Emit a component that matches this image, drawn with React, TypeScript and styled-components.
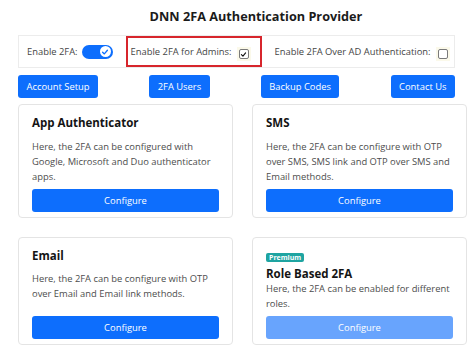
import React from 'react';
import styled, { createGlobalStyle } from 'styled-components';

const GlobalStyle = createGlobalStyle`
  body {
    margin: 0;
    background: #ffffff;
    font-family: 'Open Sans', 'Noto Sans', sans-serif;
    color: #212529;
  }
`;

const Page = styled.div`
  padding: 9px 7px 0 18px;
`;

const Header = styled.div`
  width: 437px;
`;

const Title = styled.h1`
  margin: 0 0 11px;
  padding-left: 39px;
  text-align: center;
  font-size: 12.7px;
  line-height: 15px;
  font-weight: 700;
  color: #1b1b1b;
`;

// settings strip with the three switches
const Options = styled.div`
  display: flex;
  align-items: stretch;
  gap: 13px;
  height: 31px;
  padding-left: 8px;
  border: 1px solid #ececec;
`;

const Option = styled.label<{ $highlight?: boolean; $gap: number }>`
  display: flex;
  align-items: center;
  gap: ${(p) => p.$gap}px;
  padding: ${(p) => (p.$highlight ? '0 9px 0 3px' : '0')};
  border: ${(p) => (p.$highlight ? '2px solid #d7252c' : 'none')};
  font-size: 9.4px;
  color: #454545;
  white-space: nowrap;
`;

const Toggle = styled.span`
  position: relative;
  display: inline-block;
  width: 31px;
  height: 14px;
  border-radius: 7px;
  background: #0d6efd;
`;

const Knob = styled.span`
  position: absolute;
  right: 2px;
  top: 1.5px;
  width: 11px;
  height: 11px;
  border-radius: 50%;
  background: #ffffff;
  display: flex;
  align-items: center;
  justify-content: center;
`;

const CheckCell = styled.span`
  display: inline-flex;
  padding: 2px;
  margin-top: 5px;
  background: #fbf9ea;
`;

const Check = styled.span`
  display: flex;
  align-items: center;
  justify-content: center;
  width: 8px;
  height: 8px;
  border: 1px solid #7a7a7a;
  border-radius: 2px;
  background: #ffffff;
`;

const NavRow = styled.div`
  display: flex;
  justify-content: space-between;
  margin-top: 7px;
`;

const NavButton = styled.button`
  height: 23px;
  padding: 0 8.5px;
  border: none;
  border-radius: 3px;
  background: #0d6efd;
  color: #ffffff;
  font-family: inherit;
  font-size: 9.4px;
`;

const Grid = styled.div`
  display: grid;
  grid-template-columns: 215px 215px;
  gap: 19px;
  margin-top: 6px;
`;

const Card = styled.div`
  display: flex;
  flex-direction: column;
  padding: 11px 13px 5px;
  border: 1px solid #e4e4e4;
  border-radius: 4px;
`;

const Badge = styled.span`
  align-self: flex-start;
  margin: 4px 0 5px;
  padding: 0 3px;
  border-radius: 2px;
  background: #1ea4a1;
  color: #ffffff;
  font-size: 7px;
  line-height: 9px;
  font-weight: 700;
`;

const CardTitle = styled.h5<{ $tight?: boolean }>`
  margin: 0 0 ${(p) => (p.$tight ? 0 : 8.5)}px;
  font-size: 11.5px;
  line-height: 14px;
  font-weight: 700;
  color: #141414;
`;

const CardText = styled.p`
  margin: 0 0 5px;
  font-size: 9.4px;
  line-height: 15px;
  color: #4d4d4d;
`;

const ConfigureButton = styled.button`
  margin-top: auto;
  height: 23px;
  border: none;
  border-radius: 3px;
  background: #0d6efd;
  color: #ffffff;
  font-family: inherit;
  font-size: 9.4px;
  &:disabled {
    opacity: 0.62;
  }
`;

const TickIcon = ({ color, size }: { color: string; size: number }) => (
  <svg width={size} height={size} viewBox="0 0 10 10">
    <path d="M2 5.3 L4.2 7.4 L8 2.8" fill="none" stroke={color} strokeWidth="1.6" strokeLinecap="round" strokeLinejoin="round" />
  </svg>
);

const methods = [
  {
    title: 'App Authenticator',
    text: 'Here, the 2FA can be configured with Google, Microsoft and Duo authenticator apps.',
  },
  {
    title: 'SMS',
    text: 'Here, the 2FA can be configure with OTP over SMS, SMS link and OTP over SMS and Email methods.',
  },
  {
    title: 'Email',
    text: 'Here, the 2FA can be configure with OTP over Email and Email link methods.',
  },
  {
    title: 'Role Based 2FA',
    text: 'Here, the 2FA can be enabled for different roles.',
    premium: true,
  },
];

const App: React.FC = () => {
  return (
    <Page>
      <GlobalStyle />
      <Header>
        <Title>DNN 2FA Authentication Provider</Title>
        <Options>
          <Option $gap={4}>
            Enable 2FA:
            <Toggle>
              <Knob>
                <TickIcon color="#0d6efd" size={8} />
              </Knob>
            </Toggle>
          </Option>
          <Option $highlight $gap={5}>
            Enable 2FA for Admins:
            <CheckCell>
              <Check>
                <TickIcon color="#111111" size={7} />
              </Check>
            </CheckCell>
          </Option>
          <Option $gap={5}>
            Enable 2FA Over AD Authentication:
            <CheckCell>
              <Check />
            </CheckCell>
          </Option>
        </Options>
        <NavRow>
          <NavButton>Account Setup</NavButton>
          <NavButton>2FA Users</NavButton>
          <NavButton>Backup Codes</NavButton>
          <NavButton>Contact Us</NavButton>
        </NavRow>
      </Header>
      <Grid>
        {methods.map((m) => (
          <Card key={m.title}>
            {m.premium && <Badge>Premium</Badge>}
            <CardTitle $tight={m.premium}>{m.title}</CardTitle>
            <CardText>{m.text}</CardText>
            <ConfigureButton disabled={m.premium}>Configure</ConfigureButton>
          </Card>
        ))}
      </Grid>
    </Page>
  );
};

export default App;
